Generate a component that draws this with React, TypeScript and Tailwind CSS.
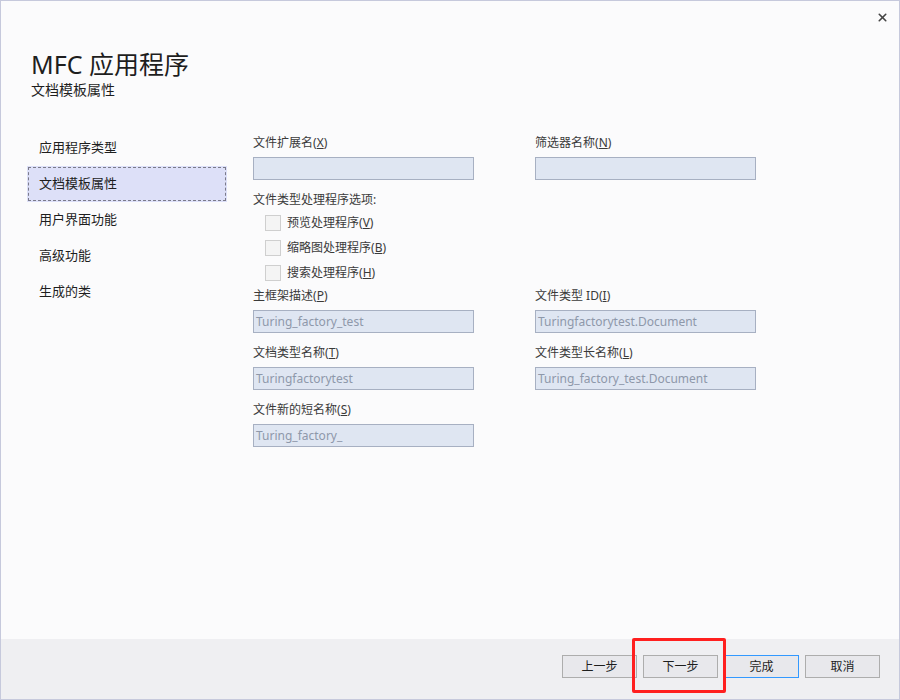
import { X } from "lucide-react";

const font = { fontFamily: '"Noto Sans", "Noto Sans CJK SC", sans-serif' };

const navItems = ["应用程序类型", "文档模板属性", "用户界面功能", "高级功能", "生成的类"];

function Label({ text, hotkey, suffix = ")" }: { text: string; hotkey: string; suffix?: string }) {
  return (
    <div className="text-[12px] leading-[16px] text-[#3a3a3a] whitespace-nowrap">
      {text}(<span className="underline">{hotkey}</span>
      {suffix}
    </div>
  );
}

function Field({ label, hotkey, value }: { label: string; hotkey: string; value?: string }) {
  return (
    <div className="flex flex-col w-[221px]">
      <Label text={label} hotkey={hotkey} />
      <div className="mt-[6px] h-[23px] border border-[#a7b0c2] bg-[#dfe6f2] px-[2px] text-[12px] leading-[21px] text-[#8e98aa] whitespace-nowrap overflow-hidden">
        {value}
      </div>
    </div>
  );
}

function Check({ label, hotkey }: { label: string; hotkey: string }) {
  return (
    <div className="flex items-center h-[16px]">
      <div className="w-[16px] h-[16px] border border-[#cfcfcf] bg-[#f4f4f4]" />
      <div className="ml-[6px]">
        <Label text={label} hotkey={hotkey} />
      </div>
    </div>
  );
}

export default function App() {
  return (
    <div
      className="relative w-[900px] h-[700px] flex flex-col border border-[#c6c9dc] bg-[#fbfbfc] overflow-hidden"
      style={font}
    >
      {/* close */}
      <button className="absolute right-[9px] top-[8px] w-[16px] h-[16px] flex items-center justify-center text-[#444]">
        <X size={13} strokeWidth={3} />
      </button>

      <div className="flex-1 flex flex-col">
        {/* header */}
        <div className="pl-[30px] pt-[48px]">
          <div className="text-[25px] leading-[30px] text-[#1e1e1e]">MFC 应用程序</div>
          <div className="mt-[2px] text-[14px] leading-[18px] text-[#1e1e1e]">文档模板属性</div>
        </div>

        <div className="flex mt-[31px]">
          {/* nav */}
          <div className="ml-[26px] w-[200px] flex flex-col">
            {navItems.map((item, i) => (
              <div
                key={item}
                className={`h-[36px] flex items-center pl-[12px] text-[13px] text-[#1e1e1e] ${
                  i === 1 ? "bg-[#dde0f8] outline outline-1 outline-dashed outline-[#7a7a8a] -outline-offset-2" : ""
                }`}
              >
                {item}
              </div>
            ))}
          </div>

          {/* form */}
          <div className="ml-[26px] pt-[5px] flex flex-col">
            <div className="flex gap-[61px]">
              <Field label="文件扩展名" hotkey="X" />
              <Field label="筛选器名称" hotkey="N" />
            </div>

            <div className="mt-[12px] text-[12px] leading-[16px] text-[#3a3a3a]">文件类型处理程序选项:</div>
            <div className="mt-[7px] ml-[12px] flex flex-col gap-[9px]">
              <Check label="预览处理程序" hotkey="V" />
              <Check label="缩略图处理程序" hotkey="B" />
              <Check label="搜索处理程序" hotkey="H" />
            </div>

            <div className="mt-[7px] flex gap-[61px]">
              <Field label="主框架描述" hotkey="P" value="Turing_factory_test" />
              <Field label="文件类型 ID" hotkey="I" value="Turingfactorytest.Document" />
            </div>
            <div className="mt-[12px] flex gap-[61px]">
              <Field label="文档类型名称" hotkey="T" value="Turingfactorytest" />
              <Field label="文件类型长名称" hotkey="L" value="Turing_factory_test.Document" />
            </div>
            <div className="mt-[12px] flex gap-[61px]">
              <Field label="文件新的短名称" hotkey="S" value="Turing_factory_" />
            </div>
          </div>
        </div>
      </div>

      {/* footer */}
      <div className="h-[60px] bg-[#efeff2] flex justify-end items-start pt-[16px] pr-[19px] gap-[6px]">
        <button className="w-[75px] h-[23px] border border-[#adadad] bg-[#e8e8ec] text-[12px] text-[#1e1e1e]">上一步</button>
        <button className="w-[75px] h-[23px] border border-[#adadad] bg-[#e8e8ec] text-[12px] text-[#1e1e1e]">下一步</button>
        <button className="w-[75px] h-[23px] border border-[#3399ff] bg-[#e8e8ec] text-[12px] text-[#1e1e1e]">完成</button>
        <button className="w-[75px] h-[23px] border border-[#adadad] bg-[#e8e8ec] text-[12px] text-[#1e1e1e]">取消</button>
      </div>

      {/* red annotation */}
      <div className="absolute left-[631px] top-[637px] w-[94px] h-[55px] border-[3px] border-[#ff1f1f] rounded-[2px]" />
    </div>
  );
}
